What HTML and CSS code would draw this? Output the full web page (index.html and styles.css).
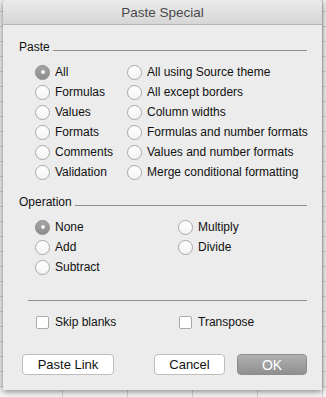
FILE: index.html
```html
<!DOCTYPE html>
<html lang="en">
<head>
    <meta charset="UTF-8">
    <title>Paste Special</title>
    <link rel="stylesheet" href="styles.css">
</head>
<body>
    <div class="dialog">
        <div class="titlebar">Paste Special</div>
        <div class="dialog-body">
            <div class="legend"><span>Paste</span><div class="legend-line"></div></div>
            <div class="options paste-options">
                <label class="option"><span class="radio checked"></span>All</label>
                <label class="option"><span class="radio"></span>All using Source theme</label>
                <label class="option"><span class="radio"></span>Formulas</label>
                <label class="option"><span class="radio"></span>All except borders</label>
                <label class="option"><span class="radio"></span>Values</label>
                <label class="option"><span class="radio"></span>Column widths</label>
                <label class="option"><span class="radio"></span>Formats</label>
                <label class="option"><span class="radio"></span>Formulas and number formats</label>
                <label class="option"><span class="radio"></span>Comments</label>
                <label class="option"><span class="radio"></span>Values and number formats</label>
                <label class="option"><span class="radio"></span>Validation</label>
                <label class="option"><span class="radio"></span>Merge conditional formatting</label>
            </div>

            <div class="legend op-legend"><span>Operation</span><div class="legend-line"></div></div>
            <div class="options op-options">
                <label class="option"><span class="radio checked"></span>None</label>
                <label class="option"><span class="radio"></span>Multiply</label>
                <label class="option"><span class="radio"></span>Add</label>
                <label class="option"><span class="radio"></span>Divide</label>
                <label class="option"><span class="radio"></span>Subtract</label>
            </div>

            <div class="separator"></div>
            <div class="options check-options">
                <label class="option"><span class="checkbox"></span>Skip blanks</label>
                <label class="option"><span class="checkbox"></span>Transpose</label>
            </div>

            <div class="buttons">
                <button class="btn btn-link">Paste Link</button>
                <div class="btn-group">
                    <button class="btn btn-cancel">Cancel</button>
                    <button class="btn btn-ok">OK</button>
                </div>
            </div>
        </div>
    </div>
</body>
</html>
```

FILE: styles.css
```css
body {
    margin: 0;
    height: 397px;
    overflow: hidden;
    font-family: 'Liberation Sans', Arial, sans-serif;
    font-size: 12px;
    color: #111;
    background-color: #f6f6f6;
    background-image:
        repeating-linear-gradient(90deg, transparent 0, transparent 62px, #d4d4d4 62px, #d4d4d4 63px, transparent 63px, transparent 65px),
        repeating-linear-gradient(180deg, transparent 0, transparent 11px, #d4d4d4 11px, #d4d4d4 12px, transparent 12px, transparent 15px);
}
.dialog {
    width: 319px;
    height: 390px;
    margin-left: 3px;
    background: #ececec;
    border-radius: 4px 4px 0 0;
    box-shadow: 0 1px 7px rgba(0, 0, 0, 0.55);
    display: flex;
    flex-direction: column;
}
.titlebar {
    height: 24px;
    line-height: 25px;
    text-align: center;
    font-size: 13.5px;
    color: #4a4a4a;
    background: linear-gradient(#ebebeb, #d6d6d6);
    border-bottom: 1px solid #b4b4b4;
    border-radius: 4px 4px 0 0;
}
.dialog-body {
    padding: 15px 15px 0 16px;
}
.legend {
    display: flex;
    align-items: flex-end;
    height: 14px;
    line-height: 14px;
    font-size: 12px;
}
.legend-line {
    flex: 1;
    margin-left: 3px;
    margin-bottom: 3px;
    border-bottom: 1px solid #8e8e8e;
}
.options {
    display: grid;
    padding-left: 16px;
    margin-top: 8px;
}
.paste-options {
    grid-template-columns: 92px 1fr;
}
.op-options {
    grid-template-columns: 143px 1fr;
}
.op-legend {
    margin-top: 13px;
}
.option {
    display: flex;
    align-items: center;
    height: 20px;
    gap: 5px;
    white-space: nowrap;
}
.radio {
    flex: none;
    width: 13px;
    height: 13px;
    border-radius: 50%;
    border: 1px solid #a9a9a9;
    background: linear-gradient(#ffffff, #f4f4f4);
    display: flex;
    align-items: center;
    justify-content: center;
}
.radio.checked {
    border-color: #8a8a8a;
    background: linear-gradient(#a5a5a5, #8c8c8c);
}
.radio.checked::after {
    content: "";
    width: 4px;
    height: 4px;
    border-radius: 50%;
    background: #f4f4f4;
}
.separator {
    margin: 23px 0 0 9px;
    border-top: 1px solid #8e8e8e;
}
.check-options {
    grid-template-columns: 143px 1fr;
    margin-top: 11px;
    padding-left: 17px;
}
.checkbox {
    flex: none;
    width: 11px;
    height: 11px;
    border: 1px solid #a9a9a9;
    border-radius: 2px;
    background: #fff;
    margin-right: 1px;
}
.buttons {
    display: flex;
    justify-content: space-between;
    margin-top: 22px;
    padding-left: 3px;
}
.btn-group {
    display: flex;
    gap: 12px;
}
.btn {
    height: 21px;
    padding: 0;
    font-family: 'Liberation Sans', Arial, sans-serif;
    font-size: 13px;
    color: #111;
    background: #fff;
    border: 1px solid #bdbdbd;
    border-radius: 4px;
}
.btn-link {
    width: 92px;
}
.btn-cancel {
    width: 71px;
}
.btn-ok {
    width: 70px;
    color: #fff;
    font-size: 14px;
    border-color: #8d8d8d;
    background: linear-gradient(#b1b1b1, #8f8f8f);
}
```
